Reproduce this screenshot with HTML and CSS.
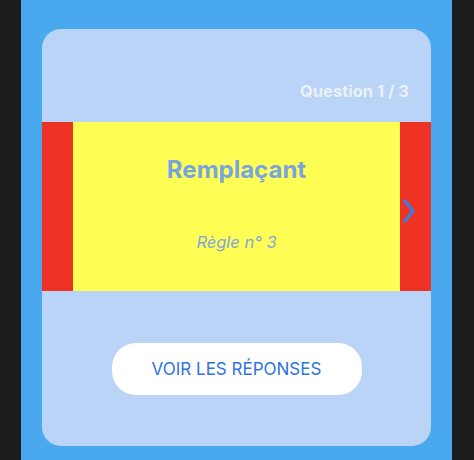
FILE: index.html
```html
<!DOCTYPE html>
<html lang="fr">
<head>
<meta charset="utf-8">
<link rel="stylesheet" href="styles.css">
</head>
<body>
<div class="shell">
  <div class="side side-left"></div>
  <div class="panel">
    <div class="card">
      <div class="counter">Question 1 / 3</div>
      <div class="band">
        <div class="edge"></div>
        <div class="face">
          <div class="title">Remplaçant</div>
          <div class="rule">Règle n° 3</div>
        </div>
        <div class="edge edge-right">
          <svg class="chev" width="14" height="24" viewBox="0 0 14 24"><path d="M3 2 L11 12 L3 22" fill="none" stroke="#3b7de4" stroke-width="3.4" stroke-linecap="round" stroke-linejoin="round"/></svg>
        </div>
      </div>
      <div class="actions">
        <button class="btn">VOIR LES RÉPONSES</button>
      </div>
    </div>
  </div>
  <div class="side side-right"></div>
</div>
</body>
</html>
```
FILE: styles.css
```css
html, body {
  margin: 0;
  padding: 0;
  background: #1c1c1c;
  font-family: Inter, Roboto, "Liberation Sans", Arial, sans-serif;
}
.shell {
  display: flex;
  width: 474px;
  height: 460px;
  overflow: hidden;
}
.side {
  background: #1c1c1c;
}
.side-left { width: 21px; }
.side-right { width: 22px; }
.panel {
  width: 431px;
  background: #4aa8ee;
  padding: 29px 21px 14px 21px;
  box-sizing: border-box;
}
.card {
  width: 389px;
  height: 417px;
  background: #b9d4f6;
  border-radius: 19px;
  display: flex;
  flex-direction: column;
  overflow: hidden;
}
.counter {
  height: 93px;
  box-sizing: border-box;
  padding: 51px 22px 0 0;
  text-align: right;
  color: #eaf1fb;
  font-weight: 700;
  font-size: 16.5px;
  line-height: 22px;
}
.band {
  display: flex;
  height: 169px;
}
.edge {
  width: 31px;
  background: #ee3224;
}
.edge-right {
  display: flex;
  align-items: center;
  padding-top: 9px;
  box-sizing: border-box;
}
.chev {
  display: block;
  margin-left: 2px;
}
.face {
  flex: 1;
  background: #fefe55;
  display: flex;
  flex-direction: column;
  align-items: center;
  padding-top: 33px;
  box-sizing: border-box;
}
.title {
  color: #78a5df;
  font-weight: 700;
  font-size: 24px;
  line-height: 30px;
}
.rule {
  margin-top: 46px;
  color: #82a6dc;
  font-style: italic;
  font-size: 16.5px;
  line-height: 22px;
}
.actions {
  display: flex;
  justify-content: center;
  padding-top: 52px;
}
.btn {
  width: 250px;
  height: 52px;
  border: none;
  border-radius: 24px;
  background: #ffffff;
  color: #2f74dc;
  font-family: Inter, Roboto, "Liberation Sans", Arial, sans-serif;
  font-size: 17px;
  padding: 0;
}
```
